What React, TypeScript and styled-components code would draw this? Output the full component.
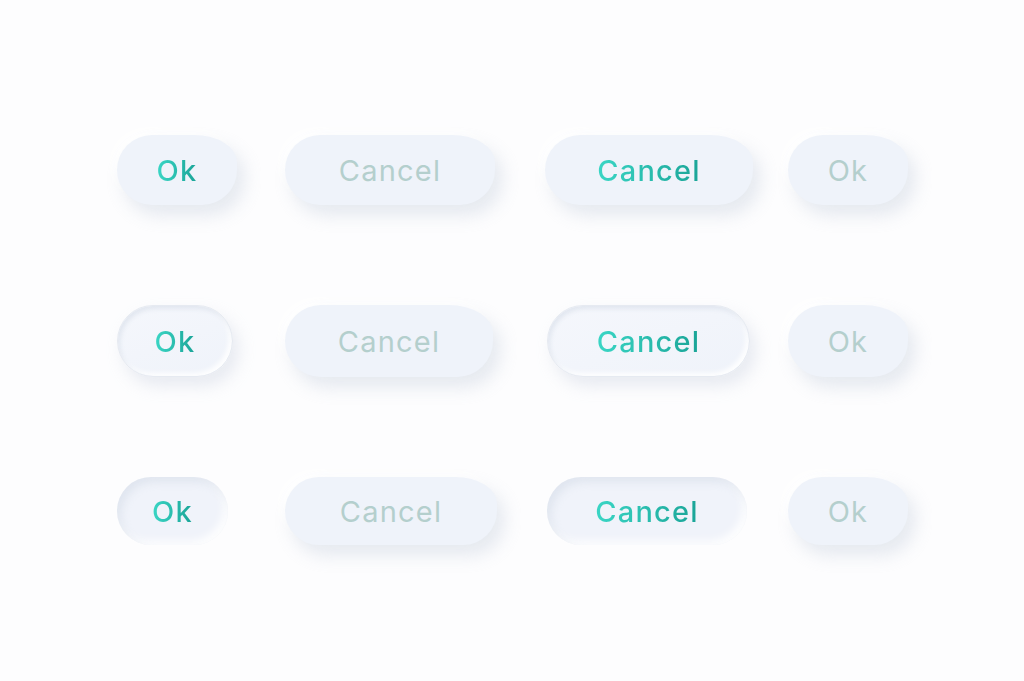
import React from "react";
import styled, {createGlobalStyle, css} from "styled-components";

type Variant = "raised" | "ringed" | "pressed";

type Item = {
    label: string;
    width: number;
    active: boolean;
    variant: Variant;
};

const rows: {height: number; items: Item[]}[] = [
    {
        height: 70,
        items: [
            {label: "Ok", width: 120, active: true, variant: "raised"},
            {label: "Cancel", width: 210, active: false, variant: "raised"},
            {label: "Cancel", width: 208, active: true, variant: "raised"},
            {label: "Ok", width: 120, active: false, variant: "raised"},
        ],
    },
    {
        height: 72,
        items: [
            {label: "Ok", width: 116, active: true, variant: "ringed"},
            {label: "Cancel", width: 208, active: false, variant: "raised"},
            {label: "Cancel", width: 203, active: true, variant: "ringed"},
            {label: "Ok", width: 120, active: false, variant: "raised"},
        ],
    },
    {
        height: 68,
        items: [
            {label: "Ok", width: 111, active: true, variant: "pressed"},
            {label: "Cancel", width: 212, active: false, variant: "raised"},
            {label: "Cancel", width: 200, active: true, variant: "pressed"},
            {label: "Ok", width: 120, active: false, variant: "raised"},
        ],
    },
];

export default function App() {
    return (
        <>
            <GlobalStyle/>
            <Page>
                {rows.map((row, r) => (
                    <Row key={r}>
                        {row.items.map((item, i) => (
                            <Button
                                key={i}
                                $variant={item.variant}
                                $height={row.height}
                                $shift={i === 2 && r > 0 ? 2 : 0}
                                style={{width: item.width}}
                            >
                                <Label $active={item.active}>{item.label}</Label>
                            </Button>
                        ))}
                    </Row>
                ))}
            </Page>
        </>
    )
}

const GlobalStyle = createGlobalStyle`
  html, body {
    margin: 0;
    padding: 0;
    background: #fdfdfe;
  }
  body {
    font-family: Inter, "Noto Sans", sans-serif;
  }
`
const Page = styled.div`
  width: 1024px;
  height: 681px;
  box-sizing: border-box;
  padding: 135px 0 0 117px;
  display: flex;
  flex-direction: column;
  gap: 100px;
  background: #fdfdfe;
  overflow: hidden;
`
const Row = styled.div`
  display: grid;
  grid-template-columns: 168px 260px 243px 130px;
  align-items: center;
`
const raised = css`
  border-radius: 36px 44px 36px 36px / 36px 28px 36px 36px;
  box-shadow: 7px 10px 18px rgba(200, 208, 222, 0.45),
  -6px -6px 12px rgba(255, 255, 255, 0.9);
`
const ringed = css`
  border-radius: 36px;
  border: 1px solid #e6eaf1;
  background: linear-gradient(160deg, #f5f7fc 0%, #eff3fa 100%);
  box-shadow: inset 2px 3px 4px rgba(205, 212, 226, 0.45),
  inset -3px -3px 5px rgba(255, 255, 255, 0.95),
  6px 9px 16px rgba(202, 210, 224, 0.42);
`
const pressed = css`
  border-radius: 34px;
  background: #f0f3fa;
  box-shadow: inset 4px 5px 9px rgba(205, 212, 226, 0.45),
  inset -4px -4px 8px rgba(255, 255, 255, 0.95);
`
const Button = styled.div<{ $variant: Variant; $height: number; $shift: number }>`
  height: ${p => p.$height}px;
  margin-left: ${p => p.$shift}px;
  display: flex;
  align-items: center;
  justify-content: center;
  background: #eff3fa;
  box-sizing: border-box;
  ${p => p.$variant === "raised" && raised}
  ${p => p.$variant === "ringed" && ringed}
  ${p => p.$variant === "pressed" && pressed}
`
const Label = styled.span<{ $active: boolean }>`
  font-size: 29px;
  letter-spacing: 1.2px;
  line-height: 1;
  font-weight: ${p => p.$active ? 500 : 400};
  color: ${p => p.$active ? "#22bfae" : "#b4cfcd"};
  ${p => p.$active && css`
    background: linear-gradient(90deg, #3ad6c5 0%, #1aa497 100%);
    -webkit-background-clip: text;
    background-clip: text;
    -webkit-text-fill-color: transparent;
  `}
`
